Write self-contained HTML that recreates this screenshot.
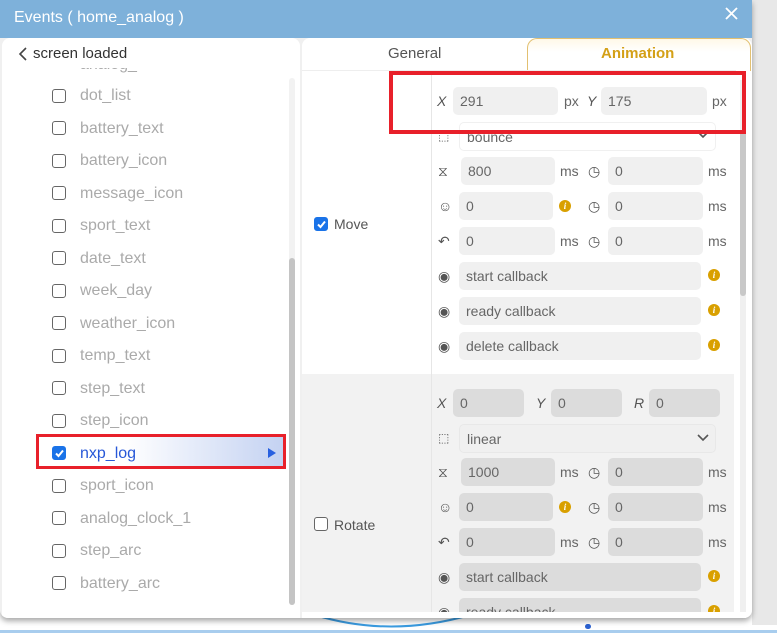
<!DOCTYPE html>
<html><head><meta charset="utf-8"><style>
*{box-sizing:border-box;margin:0;padding:0}
body{width:777px;height:633px;position:relative;overflow:hidden;background:#fff;font-family:"Liberation Sans",sans-serif;}
.a{position:absolute}
.t{position:absolute;font-size:15px;color:#555;white-space:nowrap;line-height:18px}
.cb{position:absolute;width:14px;height:14px;border:1.5px solid #666;border-radius:3px;background:#fff}
.it{position:absolute;left:80px;font-size:16px;color:#aaa;line-height:20px}
.in{position:absolute;height:28px;border-radius:5px;background:#f0f0f0;font-size:14px;color:#666;line-height:28px;padding-left:7px}
.dk{background:#dcdcdc}
.info{position:absolute;width:12px;height:12px;border-radius:50%;background:#d9a000;color:#fff;font-size:9px;font-weight:bold;font-style:italic;text-align:center;line-height:12px;font-family:"Liberation Serif",serif}
.ms{position:absolute;font-size:14px;color:#666;line-height:28px}
.ic{position:absolute;font-size:14px;color:#555;line-height:28px}
</style></head><body>
<div class="a" style="left:752px;top:0;width:25px;height:625px;background:#e8e8e8"></div>
<svg class="a" style="left:300px;top:610px" width="200" height="20"><path d="M15 5Q90 28 170 5" stroke="#3a9be0" stroke-width="2" fill="none"/><path d="M355 0" /></svg>
<div class="a" style="left:585px;top:624px;width:6px;height:5px;background:#2a60d0;border-radius:3px"></div>
<div class="a" style="left:0;top:630px;width:777px;height:3px;background:#a8cdee"></div>
<div class="a" style="left:0;top:0;width:752px;height:618px;background:#f0f0f0;border-radius:0 0 8px 8px;box-shadow:0 3px 6px rgba(0,0,0,.35);overflow:hidden">
 <div class="a" style="left:0;top:0;width:752px;height:38px;background:#7eb1da"></div>
 <div class="t" style="left:14px;top:8px;font-size:16px;color:#fff;line-height:20px">Events ( home_analog )</div>
 <svg class="a" style="left:725px;top:7px" width="13" height="13"><path d="M1 1L12 12M12 1L1 12" stroke="#fff" stroke-width="1.8"/></svg>
 <div class="a" style="left:2px;top:38px;width:298px;height:580px;background:#fff;border-radius:8px 8px 0 0"></div>
 <svg class="a" style="left:18px;top:47px" width="10" height="14"><path d="M8 1L2 7L8 13" stroke="#444" stroke-width="1.6" fill="none"/></svg>
 <div class="t" style="left:33px;top:45px;color:#333;font-size:15px">screen loaded</div>
 <div class="a" style="left:289px;top:78px;width:6px;height:527px;background:#f2f2f2;border-radius:3px"></div>
 <div class="a" style="left:289px;top:258px;width:6px;height:347px;background:#c4c4c4;border-radius:3px"></div>
 <div class="a" style="left:36px;top:434px;width:250px;height:35px;border:3px solid #e8202a;background:linear-gradient(90deg,#fff 35%,#c4d2f2)"></div>
 <svg class="a" style="left:267px;top:447px" width="10" height="12"><path d="M1 1L9 6L1 11Z" fill="#2860e0"/></svg>
 <div class="a" style="left:302px;top:38px;width:450px;height:580px;background:#fff;border-radius:8px 8px 0 0"></div>
 <div class="t" style="left:388px;top:45px;color:#555">General</div>
 <div class="a" style="left:527px;top:38px;width:224px;height:33px;border:1.5px solid #e2c071;border-bottom:none;border-radius:10px 10px 0 0;background:linear-gradient(#fff8e8,#fff 40%)"></div>
 <div class="t" style="left:601px;top:45px;color:#d4a017;font-weight:bold">Animation</div>
 <div class="a" style="left:302px;top:70px;width:434px;height:1px;background:#eee"></div>
 <div class="a" style="left:302px;top:374px;width:432px;height:240px;background:#f2f2f2"></div>
 <div class="a" style="left:431px;top:71px;width:1px;height:545px;background:#e6e6e6"></div>
 <div class="a" style="left:740px;top:80px;width:6px;height:532px;background:#f0f0f0"></div>
 <div class="a" style="left:740px;top:130px;width:6px;height:166px;background:#c8c8c8;border-radius:3px"></div>
 <div class="a" style="left:302px;top:612px;width:450px;height:6px;background:#fff"></div>
</div>
<!-- list -->
<div class="a" style="left:80px;top:68px;width:80px;height:6px;overflow:hidden"><div class="it" style="left:0;top:-13px">analog_</div></div>
<div class="cb" style="left:52px;top:89px"></div><div class="it" style="top:86px">dot_list</div>
<div class="cb" style="left:52px;top:121px"></div><div class="it" style="top:119px">battery_text</div>
<div class="cb" style="left:52px;top:154px"></div><div class="it" style="top:151px">battery_icon</div>
<div class="cb" style="left:52px;top:186px"></div><div class="it" style="top:184px">message_icon</div>
<div class="cb" style="left:52px;top:219px"></div><div class="it" style="top:216px">sport_text</div>
<div class="cb" style="left:52px;top:251px"></div><div class="it" style="top:249px">date_text</div>
<div class="cb" style="left:52px;top:284px"></div><div class="it" style="top:281px">week_day</div>
<div class="cb" style="left:52px;top:316px"></div><div class="it" style="top:314px">weather_icon</div>
<div class="cb" style="left:52px;top:349px"></div><div class="it" style="top:346px">temp_text</div>
<div class="cb" style="left:52px;top:381px"></div><div class="it" style="top:379px">step_text</div>
<div class="cb" style="left:52px;top:414px"></div><div class="it" style="top:411px">step_icon</div>
<div class="cb" style="left:52px;top:446px;background:#1a73e8;border-color:#1a73e8"></div><svg class="a" style="left:54px;top:448px" width="11" height="11"><path d="M2 5.5L4.5 8L9 2.5" stroke="#fff" stroke-width="2" fill="none"/></svg><div class="it" style="top:444px;color:#2858d8">nxp_log</div>
<div class="cb" style="left:52px;top:479px"></div><div class="it" style="top:476px">sport_icon</div>
<div class="cb" style="left:52px;top:511px"></div><div class="it" style="top:509px">analog_clock_1</div>
<div class="cb" style="left:52px;top:544px"></div><div class="it" style="top:541px">step_arc</div>
<div class="cb" style="left:52px;top:576px"></div><div class="it" style="top:574px">battery_arc</div>
<!-- move -->
<div class="cb" style="left:314px;top:217px;background:#1a73e8;border-color:#1a73e8"></div><svg class="a" style="left:316px;top:219px" width="11" height="11"><path d="M2 5.5L4.5 8L9 2.5" stroke="#fff" stroke-width="2" fill="none"/></svg>
<div class="t" style="left:334px;top:215px;font-size:14px">Move</div>
<div class="ic" style="left:437px;top:87px;font-style:italic">X</div>
<div class="in" style="left:453px;top:87px;width:105px">291</div>
<div class="ms" style="left:564px;top:87px">px</div>
<div class="ic" style="left:587px;top:87px;font-style:italic">Y</div>
<div class="in" style="left:601px;top:87px;width:106px">175</div>
<div class="ms" style="left:712px;top:87px">px</div>
<div class="in" style="left:459px;top:122px;width:257px;height:29px;background:#fff;border:1px solid #f0f0f0">bounce</div>
<div class="ic" style="left:438px;top:122px;font-size:12px">⬚</div>
<svg class="a" style="left:697px;top:131px" width="12" height="8"><path d="M1 1L6 6L11 1" stroke="#555" stroke-width="1.6" fill="none"/></svg>
<div class="ic" style="left:438px;top:157px">⧖</div><div class="in" style="left:461px;top:157px;width:94px">800</div><div class="ms" style="left:560px;top:157px">ms</div><div class="ic" style="left:588px;top:157px">◷</div><div class="in" style="left:608px;top:157px;width:95px">0</div><div class="ms" style="left:708px;top:157px">ms</div>
<div class="ic" style="left:438px;top:192px">☺</div><div class="in" style="left:459px;top:192px;width:94px">0</div><div class="info" style="left:559px;top:200px">i</div><div class="ic" style="left:588px;top:192px">◷</div><div class="in" style="left:608px;top:192px;width:95px">0</div><div class="ms" style="left:708px;top:192px">ms</div>
<div class="ic" style="left:438px;top:227px">↶</div><div class="in" style="left:459px;top:227px;width:96px">0</div><div class="ms" style="left:560px;top:227px">ms</div><div class="ic" style="left:588px;top:227px">◷</div><div class="in" style="left:608px;top:227px;width:95px">0</div><div class="ms" style="left:708px;top:227px">ms</div>
<div class="ic" style="left:438px;top:262px">◉</div><div class="in" style="left:459px;top:262px;width:242px">start callback</div><div class="info" style="left:708px;top:269px">i</div>
<div class="ic" style="left:438px;top:297px">◉</div><div class="in" style="left:459px;top:297px;width:242px">ready callback</div><div class="info" style="left:708px;top:304px">i</div>
<div class="ic" style="left:438px;top:332px">◉</div><div class="in" style="left:459px;top:332px;width:242px">delete callback</div><div class="info" style="left:708px;top:339px">i</div>
<div class="a" style="left:389px;top:71px;width:357px;height:63px;border:4px solid #e8202a"></div>
<!-- rotate -->
<div class="cb" style="left:314px;top:517px"></div>
<div class="t" style="left:334px;top:516px;font-size:14px">Rotate</div>
<div class="ic" style="left:437px;top:389px;font-style:italic">X</div><div class="in dk" style="left:453px;top:389px;width:71px">0</div>
<div class="ic" style="left:536px;top:389px;font-style:italic">Y</div><div class="in dk" style="left:551px;top:389px;width:71px">0</div>
<div class="ic" style="left:634px;top:389px;font-style:italic">R</div><div class="in dk" style="left:649px;top:389px;width:71px">0</div>
<div class="in" style="left:459px;top:424px;width:257px;height:29px;background:#f0f0f0;border:1px solid #e8e8e8">linear</div>
<div class="ic" style="left:438px;top:424px;font-size:12px">⬚</div>
<svg class="a" style="left:697px;top:434px" width="12" height="8"><path d="M1 1L6 6L11 1" stroke="#555" stroke-width="1.6" fill="none"/></svg>
<div class="ic" style="left:438px;top:458px">⧖</div><div class="in dk" style="left:461px;top:458px;width:94px">1000</div><div class="ms" style="left:560px;top:458px">ms</div><div class="ic" style="left:588px;top:458px">◷</div><div class="in dk" style="left:608px;top:458px;width:95px">0</div><div class="ms" style="left:708px;top:458px">ms</div>
<div class="ic" style="left:438px;top:493px">☺</div><div class="in dk" style="left:459px;top:493px;width:94px">0</div><div class="info" style="left:559px;top:501px">i</div><div class="ic" style="left:588px;top:493px">◷</div><div class="in dk" style="left:608px;top:493px;width:95px">0</div><div class="ms" style="left:708px;top:493px">ms</div>
<div class="ic" style="left:438px;top:528px">↶</div><div class="in dk" style="left:459px;top:528px;width:96px">0</div><div class="ms" style="left:560px;top:528px">ms</div><div class="ic" style="left:588px;top:528px">◷</div><div class="in dk" style="left:608px;top:528px;width:95px">0</div><div class="ms" style="left:708px;top:528px">ms</div>
<div class="ic" style="left:438px;top:563px">◉</div><div class="in dk" style="left:459px;top:563px;width:242px">start callback</div><div class="info" style="left:708px;top:570px">i</div>
<div class="a" style="left:430px;top:598px;width:290px;height:14px;overflow:hidden"><div class="ic" style="left:8px;top:0">◉</div><div class="in dk" style="left:29px;top:0;width:242px">ready callback</div><div class="info" style="left:278px;top:7px">i</div></div>
</body></html>
